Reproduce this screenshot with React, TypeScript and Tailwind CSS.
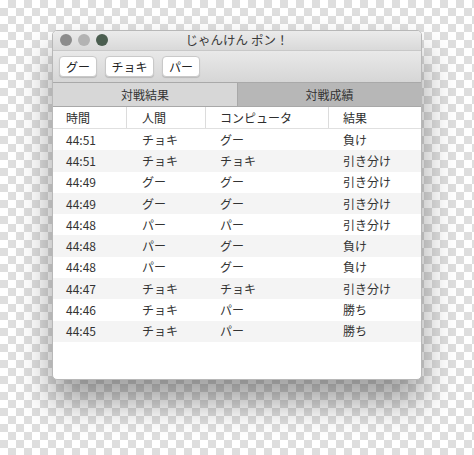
const rows = [
  ['44:51', 'チョキ', 'グー', '負け'],
  ['44:51', 'チョキ', 'チョキ', '引き分け'],
  ['44:49', 'グー', 'グー', '引き分け'],
  ['44:49', 'グー', 'グー', '引き分け'],
  ['44:48', 'パー', 'パー', '引き分け'],
  ['44:48', 'パー', 'グー', '負け'],
  ['44:48', 'パー', 'グー', '負け'],
  ['44:47', 'チョキ', 'チョキ', '引き分け'],
  ['44:46', 'チョキ', 'パー', '勝ち'],
  ['44:45', 'チョキ', 'パー', '勝ち'],
];

const cols = ['w-[74px] pl-[13px]', 'w-[79px] pl-[15px]', 'w-[123px] pl-[14px]', 'flex-1 pl-[14px]'];

export default function App() {
  return (
    <div
      className="w-[474px] h-[455px] pt-[30px] flex justify-center bg-[repeating-conic-gradient(#dedede_0%_25%,#ffffff_0%_50%)] bg-[length:16px_16px]"
      style={{ fontFamily: '"Noto Sans CJK JP", "Liberation Sans", sans-serif' }}
    >
      <div className="w-[370px] h-[350px] flex flex-col bg-white rounded-[5px] overflow-hidden border border-[#b8b8b8] shadow-[0_22px_34px_rgba(0,0,0,0.38)]">
        {/* title bar */}
        <div className="relative h-[19px] flex items-center justify-center bg-gradient-to-b from-[#ebebeb] to-[#d9d9d9] text-[12.5px] text-[#3a3a3a]">
          <div className="absolute left-[7px] top-[3px] flex gap-[6px]">
            <span className="w-[12px] h-[12px] rounded-full bg-[#8c8c8c]" />
            <span className="w-[12px] h-[12px] rounded-full bg-[#b3b3b3]" />
            <span className="w-[12px] h-[12px] rounded-full bg-[#4b5e50]" />
          </div>
          じゃんけん ポン！
        </div>
        {/* toolbar */}
        <div className="h-[33px] flex items-center gap-[8px] px-[6px] bg-gradient-to-b from-[#e9e9e9] to-[#d6d6d6] border-t border-[#c8c8c8] border-b border-b-[#a9a9a9]">
          {['グー', 'チョキ', 'パー'].map((b, i) => (
            <button
              key={b}
              className={`h-[21px] ${i === 1 ? 'w-[49px]' : 'w-[38px]'} bg-white rounded-[4px] border border-[#c9c9c9] shadow-[0_1px_1px_rgba(0,0,0,0.15)] text-[12px] text-[#222] flex items-center justify-center`}
            >
              {b}
            </button>
          ))}
        </div>
        {/* tabs */}
        <div className="h-[24px] flex text-[12px] text-[#333] border-b border-[#a8a8a8]">
          <div className="w-[185px] flex items-center justify-center bg-[#d7d7d7] border-r border-[#a8a8a8]">対戦結果</div>
          <div className="flex-1 flex items-center justify-center bg-[#b7b7b7]">対戦成績</div>
        </div>
        {/* header */}
        <div className="h-[22px] flex text-[12px] text-[#2e2e2e] border-b border-[#e0e0e0]">
          {['時間', '人間', 'コンピュータ', '結果'].map((h, i) => (
            <div key={h} className={`${cols[i]} flex items-center ${i < 3 ? 'border-r border-[#dcdcdc]' : ''}`}>
              {h}
            </div>
          ))}
        </div>
        {/* rows */}
        <div className="flex flex-col">
          {rows.map((r, ri) => (
            <div key={ri} className={`h-[21.3px] flex text-[12px] text-[#333] ${ri % 2 ? 'bg-[#f4f4f4]' : 'bg-white'}`}>
              {r.map((c, ci) => (
                <div key={ci} className={`${cols[ci]} flex items-center`}>
                  {c}
                </div>
              ))}
            </div>
          ))}
        </div>
      </div>
    </div>
  );
}
